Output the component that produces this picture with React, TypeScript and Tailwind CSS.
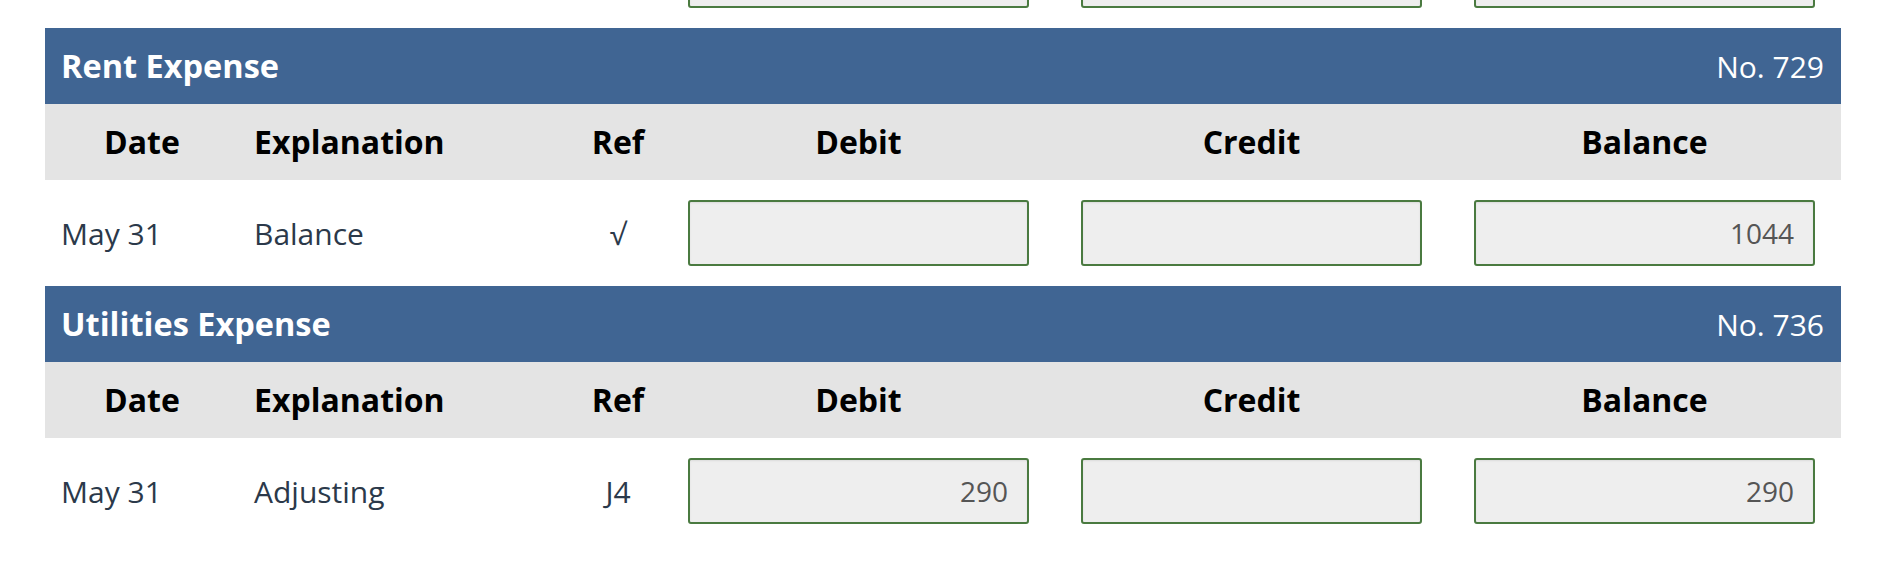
import React from "react";

type Row = { date: string; expl: string; ref: string; debit: string; credit: string; balance: string };
type Account = { title: string; no: string; rows: Row[] };

const accounts: Account[] = [
  {
    title: "Rent Expense",
    no: "No. 729",
    rows: [{ date: "May 31", expl: "Balance", ref: "\u221A", debit: "", credit: "", balance: "1044" }],
  },
  {
    title: "Utilities Expense",
    no: "No. 736",
    rows: [{ date: "May 31", expl: "Adjusting", ref: "J4", debit: "290", credit: "", balance: "290" }],
  },
];

const cols = "grid grid-cols-[194px_335px_88px_1fr_1fr_1fr]";

function AmountBox({ value }: { value: string }) {
  return (
    <div className="mx-[26px] h-[66px] rounded-[3px] border-2 border-[#4a7a40] bg-[#eeeeee] shadow-[inset_0_1px_2px_rgba(0,0,0,0.08)] flex items-center justify-end pr-[19px] text-[28px] text-[#555555]">
      {value}
    </div>
  );
}

function DataRow({ row }: { row: Row }) {
  return (
    <div className={`${cols} h-[106px] items-center text-[30px] text-[#2b394a]`}>
      <div className="pl-[16px]">{row.date}</div>
      <div className="pl-[15px]">{row.expl}</div>
      <div className="text-center">{row.ref}</div>
      <AmountBox value={row.debit} />
      <AmountBox value={row.credit} />
      <AmountBox value={row.balance} />
    </div>
  );
}

function Ledger({ acc }: { acc: Account }) {
  return (
    <div>
      <div className="h-[76px] bg-[#406593] flex items-center justify-between pl-[16px] pr-[17px] text-white">
        <div className="text-[32.5px] font-bold">{acc.title}</div>
        <div className="text-[30px]">{acc.no}</div>
      </div>
      <div className={`${cols} h-[76px] items-center bg-[#e4e4e4] text-[32px] font-bold text-black`}>
        <div className="text-center">Date</div>
        <div className="pl-[15px]">Explanation</div>
        <div className="text-center">Ref</div>
        <div className="text-center">Debit</div>
        <div className="text-center">Credit</div>
        <div className="text-center">Balance</div>
      </div>
      {acc.rows.map((r, i) => (
        <DataRow key={i} row={r} />
      ))}
    </div>
  );
}

export default function App() {
  return (
    <div
      className="w-[1888px] h-[584px] overflow-hidden bg-white"
      style={{ fontFamily: '"Open Sans", "Noto Sans", sans-serif' }}
    >
      <div className="pl-[45px] pr-[47px]">
        <div className="-mt-[78px]">
          <DataRow row={{ date: "", expl: "", ref: "", debit: "", credit: "", balance: "" }} />
        </div>
        {accounts.map((a) => (
          <Ledger key={a.no} acc={a} />
        ))}
      </div>
    </div>
  );
}
